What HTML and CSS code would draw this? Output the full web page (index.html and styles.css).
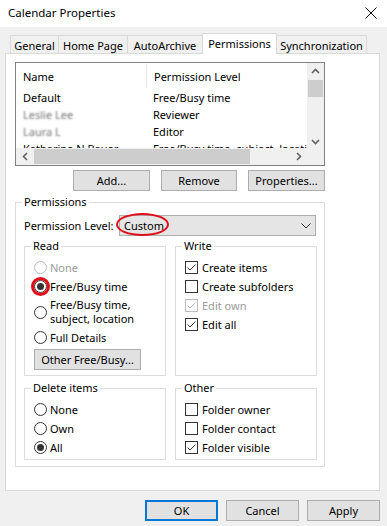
FILE: index.html
```html
<!DOCTYPE html>
<html lang="en">
<head>
  <meta charset="UTF-8" />
  <title>Calendar Properties</title>
  <link rel="stylesheet" href="styles.css">
</head>
<body>
  <div class="window">
    <header class="titlebar">
      <span class="title">Calendar Properties</span>
      <svg class="close" width="12" height="12" viewBox="0 0 12 12">
        <path d="M0.5 0.5 L11.5 11.5 M11.5 0.5 L0.5 11.5" stroke="#000" stroke-width="1" fill="none"/>
      </svg>
    </header>

    <nav class="tabs">
      <div class="tab tab-general">General</div>
      <div class="tab tab-home">Home Page</div>
      <div class="tab tab-archive">AutoArchive</div>
      <div class="tab tab-perm active">Permissions</div>
      <div class="tab tab-sync">Synchronization</div>
    </nav>

    <main class="panel">
      <!-- user list -->
      <div class="listview">
        <div class="list-body">
          <div class="list-head">
            <span class="col-name">Name</span>
            <span class="col-level">Permission Level</span>
          </div>
          <div class="list-row"><span class="col-name">Default</span><span class="col-level">Free/Busy time</span></div>
          <div class="list-row"><span class="col-name redacted">Leslie Lee</span><span class="col-level">Reviewer</span></div>
          <div class="list-row"><span class="col-name redacted">Laura L</span><span class="col-level">Editor</span></div>
          <div class="list-row"><span class="col-name">Katharine N Bauer</span><span class="col-level">Free/Busy time, subject, locati</span></div>
        </div>
        <div class="vscroll">
          <svg class="arrow" width="9" height="6" viewBox="0 0 9 6"><path d="M1 5 L4.5 1.5 L8 5" stroke="#606060" stroke-width="1.6" fill="none"/></svg>
          <div class="vthumb"></div>
          <div class="vtrack"></div>
          <svg class="arrow" width="9" height="6" viewBox="0 0 9 6"><path d="M1 1 L4.5 4.5 L8 1" stroke="#606060" stroke-width="1.6" fill="none"/></svg>
        </div>
        <div class="hscroll">
          <svg class="arrow" width="6" height="9" viewBox="0 0 6 9"><path d="M5 1 L1.5 4.5 L5 8" stroke="#606060" stroke-width="1.6" fill="none"/></svg>
          <div class="hthumb"></div>
          <div class="htrack"></div>
          <svg class="arrow" width="6" height="9" viewBox="0 0 6 9"><path d="M1 1 L4.5 4.5 L1 8" stroke="#606060" stroke-width="1.6" fill="none"/></svg>
        </div>
        <div class="corner"></div>
      </div>

      <div class="list-buttons">
        <button class="btn btn-add">Add...</button>
        <button class="btn btn-remove">Remove</button>
        <button class="btn btn-props">Properties...</button>
      </div>

      <fieldset class="group permissions">
        <legend>Permissions</legend>
        <div class="level-row">
          <span class="level-label">Permission Level:</span>
          <div class="combo">
            <span class="combo-value">Custom</span>
            <svg width="10" height="6" viewBox="0 0 10 6"><path d="M0.5 0.5 L5 5 L9.5 0.5" stroke="#333" stroke-width="1" fill="none"/></svg>
            <span class="mark-ellipse"></span>
          </div>
        </div>

        <div class="group-grid">
          <fieldset class="group">
            <legend>Read</legend>
            <label class="option disabled"><span class="radio"></span>None</label>
            <label class="option"><span class="radio checked"><span class="mark-ring"></span></span>Free/Busy time</label>
            <label class="option two-line"><span class="radio"></span><span>Free/Busy time,<br>subject, location</span></label>
            <label class="option"><span class="radio"></span>Full Details</label>
            <button class="btn btn-other">Other Free/Busy...</button>
          </fieldset>

          <fieldset class="group">
            <legend>Write</legend>
            <label class="option"><span class="check checked"></span>Create items</label>
            <label class="option"><span class="check"></span>Create subfolders</label>
            <label class="option disabled"><span class="check checked"></span>Edit own</label>
            <label class="option"><span class="check checked"></span>Edit all</label>
          </fieldset>

          <fieldset class="group">
            <legend>Delete items</legend>
            <label class="option"><span class="radio"></span>None</label>
            <label class="option"><span class="radio"></span>Own</label>
            <label class="option"><span class="radio checked"></span>All</label>
          </fieldset>

          <fieldset class="group">
            <legend>Other</legend>
            <label class="option"><span class="check"></span>Folder owner</label>
            <label class="option"><span class="check"></span>Folder contact</label>
            <label class="option"><span class="check checked"></span>Folder visible</label>
          </fieldset>
        </div>
      </fieldset>
    </main>

    <footer class="dialog-buttons">
      <button class="btn btn-dialog default">OK</button>
      <button class="btn btn-dialog">Cancel</button>
      <button class="btn btn-dialog">Apply</button>
    </footer>
  </div>
</body>
</html>
```

FILE: styles.css
```css
body {
  margin: 0;
  background: #f0f0f0;
  font-family: 'Noto Sans', sans-serif;
  font-size: 11px;
  line-height: 15px;
  color: #000;
}

.window {
  width: 387px;
  height: 526px;
  overflow: hidden;
  display: flex;
  flex-direction: column;
}

.titlebar {
  height: 27px;
  flex: none;
  background: #fff;
  display: flex;
  align-items: center;
  justify-content: space-between;
  padding: 0 10px 2px 8px;
  box-sizing: border-box;
}

.title {
  font-size: 11.5px;
}

/* tabs */
.tabs {
  display: flex;
  align-items: flex-end;
  margin: 7px 0 0 10px;
  height: 20px;
  position: relative;
  z-index: 1;
}

.tab {
  height: 18px;
  box-sizing: border-box;
  border: 1px solid #d9d9d9;
  border-bottom: none;
  margin-left: -1px;
  display: flex;
  align-items: center;
  justify-content: center;
  background: #f0f0f0;
  margin-bottom: 1px;
  padding-top: 1px;
}

.tab:first-child { margin-left: 0; }
.tab-general { width: 49px; }
.tab-home { width: 70px; }
.tab-archive { width: 76px; }
.tab-perm { width: 75px; }
.tab-sync { width: 91px; }

.tab.active {
  height: 21px;
  background: #fff;
  margin-bottom: 0;
  padding-top: 0;
  padding-bottom: 2px;
}

/* panel */
.panel {
  margin: -1px 7px 0 5px;
  background: #fff;
  border: 1px solid #d9d9d9;
  padding: 8px 0 23px 9px;
}

.listview {
  width: 310px;
  height: 104px;
  box-sizing: border-box;
  border: 1px solid #828282;
  display: grid;
  grid-template-columns: 291px 17px;
  grid-template-rows: 85px 17px;
}

.list-body {
  overflow: hidden;
}

.list-head {
  display: flex;
  height: 26px;
  align-items: center;
}

.list-head .col-name {
  align-self: stretch;
  display: flex;
  align-items: center;
  border-right: 1px solid #e5e5e5;
  margin: 1px 0;
}

.col-name {
  width: 123px;
  flex: none;
  padding-left: 7px;
  white-space: nowrap;
  overflow: hidden;
}

.col-level {
  padding-left: 7px;
  white-space: nowrap;
}

.list-row {
  display: flex;
  height: 17px;
  align-items: center;
}

.redacted {
  color: transparent;
  text-shadow: 0 0 2px rgba(0, 0, 0, 0.55);
}

.vscroll {
  background: #f0f0f0;
  display: flex;
  flex-direction: column;
  align-items: center;
  padding: 5px 0 3px;
  box-sizing: border-box;
}

.vthumb {
  width: 15px;
  height: 17px;
  background: #cdcdcd;
  margin-top: 6px;
}

.vtrack { flex: 1; }

.hscroll {
  background: #f0f0f0;
  display: flex;
  align-items: center;
  padding: 0 5px 0 6px;
}

.hthumb {
  width: 216px;
  height: 15px;
  background: #cdcdcd;
  margin-left: 6px;
}

.htrack { flex: 1; }

.corner {
  background: #f0f0f0;
}

/* buttons */
.btn {
  font: inherit;
  color: #000;
  background: #e1e1e1;
  border: 1px solid #adadad;
  height: 21px;
  padding: 0;
}

.list-buttons {
  width: 310px;
  display: flex;
  justify-content: flex-end;
  gap: 11px;
  margin-top: 4px;
}

.btn-add, .btn-props { width: 77px; }
.btn-remove { width: 76px; }

/* group boxes */
.group {
  border: 1px solid #dcdcdc;
  margin: 0;
  min-width: 0;
}

.group legend {
  line-height: 16px;
  padding: 0 2px;
  margin-left: -2px;
}

.permissions {
  width: 310px;
  box-sizing: border-box;
  margin-top: 3px;
  padding: 5px 7px 6px 8px;
}

.level-row {
  display: flex;
  align-items: center;
}

.level-label {
  width: 95px;
  flex: none;
  white-space: nowrap;
}

.combo {
  position: relative;
  flex: 1;
  height: 21px;
  box-sizing: border-box;
  margin-right: 1px;
  background: #e5e5e5;
  border: 1px solid #adadad;
  display: flex;
  align-items: center;
  justify-content: space-between;
  padding: 0 4px 0 4px;
}

.mark-ellipse {
  position: absolute;
  left: -4px;
  top: -3px;
  width: 53px;
  height: 23px;
  border: 2.5px solid #e0101a;
  border-radius: 50%;
  box-sizing: border-box;
}

.group-grid {
  display: grid;
  grid-template-columns: 142px 142px;
  column-gap: 9px;
  row-gap: 4px;
  margin-top: 2px;
}

.group-grid .group {
  padding: 4px 6px 2px 9px;
}

.group-grid .group:nth-child(1),
.group-grid .group:nth-child(2) {
  padding-bottom: 5px;
}

.group-grid .group legend {
  margin-left: -3px;
}

.option {
  display: flex;
  align-items: center;
  height: 19px;
  gap: 3px;
  white-space: nowrap;
}

.option.two-line {
  height: 32px;
  line-height: 14px;
}

.option.disabled {
  color: #9b9b9b;
}

.radio {
  position: relative;
  width: 13px;
  height: 13px;
  flex: none;
  box-sizing: border-box;
  border: 1px solid #333;
  border-radius: 50%;
  background: #fff;
  display: flex;
  align-items: center;
  justify-content: center;
}

.radio.checked::after {
  content: '';
  width: 7px;
  height: 7px;
  border-radius: 50%;
  background: #333;
}

.disabled .radio {
  border-color: #bcbcbc;
}

.mark-ring {
  position: absolute;
  left: -4px;
  top: -4px;
  width: 19px;
  height: 19px;
  box-sizing: border-box;
  border: 3px solid #e0101a;
  border-radius: 50%;
}

.check {
  width: 13px;
  height: 13px;
  flex: none;
  box-sizing: border-box;
  border: 1px solid #333;
  background: #fff;
  margin-right: 1px;
}

.check.checked {
  background: #fff url("data:image/svg+xml,%3Csvg xmlns='http://www.w3.org/2000/svg' width='11' height='11'%3E%3Cpath d='M1.5 5.5 L4 8 L9.5 2.5' stroke='%23333' stroke-width='1' fill='none'/%3E%3C/svg%3E") no-repeat center;
}

.disabled .check {
  border-color: #bcbcbc;
}

.disabled .check.checked {
  background-image: url("data:image/svg+xml,%3Csvg xmlns='http://www.w3.org/2000/svg' width='11' height='11'%3E%3Cpath d='M1.5 5.5 L4 8 L9.5 2.5' stroke='%23bcbcbc' stroke-width='1' fill='none'/%3E%3C/svg%3E");
}

.btn-other {
  width: 107px;
  margin-top: 2px;
}

/* footer */
.dialog-buttons {
  display: flex;
  justify-content: flex-end;
  gap: 8px;
  padding: 9px 7px 0 0;
}

.btn-dialog {
  width: 73px;
}

.btn-dialog.default {
  border: 2px solid #0078d7;
}
```
